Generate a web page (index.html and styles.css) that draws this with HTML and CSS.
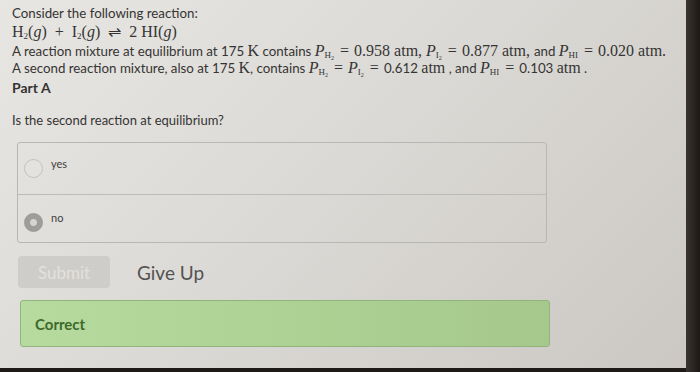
FILE: index.html
```html
<!DOCTYPE html>
<html>
<head>
<meta charset="utf-8">
<link rel="stylesheet" href="styles.css">
</head>
<body>
<div class="screen">
  <div class="page">
    <div class="intro">
      <div class="line">Consider the following reaction:</div>
      <div class="line eq"><span class="m">H<sub>2</sub>(<i>g</i>) &nbsp;+&nbsp; I<sub>2</sub>(<i>g</i>) &nbsp;⇌&nbsp; 2 HI(<i>g</i>)</span></div>
      <div class="line">A reaction mixture at equilibrium at 175 <span class="m">K</span> contains <span class="m"><i>P</i><sub>H<span class="s2">2</span></sub><span class="op">=</span>0.958 atm, <i>P</i><sub>I<span class="s2">2</span></sub><span class="op">=</span>0.877 atm, </span>and <span class="m"><i>P</i><sub>HI</sub><span class="op">=</span>0.020 atm.</span></div>
      <div class="line">A second reaction mixture, also at 175 <span class="m">K</span>, contains <span class="m"><i>P</i><sub>H<span class="s2">2</span></sub><span class="op">=</span><i>P</i><sub>I<span class="s2">2</span></sub><span class="op">=</span></span>0.612 <span class="m">atm</span> , and <span class="m"><i>P</i><sub>HI</sub><span class="op">=</span></span>0.103 <span class="m">atm</span> .</div>
    </div>
    <div class="part">Part A</div>
    <div class="question">Is the second reaction at equilibrium?</div>
    <div class="choices">
      <div class="choice"><span class="radio"></span><span class="label">yes</span></div>
      <div class="choice"><span class="radio on"></span><span class="label">no</span></div>
    </div>
    <div class="actions">
      <span class="submit">Submit</span>
      <span class="giveup">Give Up</span>
    </div>
    <div class="correct">Correct</div>
  </div>
  <div class="bezel"></div>
</div>
</body>
</html>
```
FILE: styles.css
```css
html, body {
  margin: 0;
  padding: 0;
  width: 700px;
  height: 372px;
  overflow: hidden;
  background: #1e1a18;
}
.screen {
  display: flex;
  width: 700px;
  height: 372px;
}
.page {
  flex: 1;
  height: 368px;
  background: linear-gradient(135deg, #e8e6e2 0%, #dcdad6 45%, #cbc8c4 100%);
  font-family: Lato, "Open Sans", sans-serif;
  color: #353433;
  padding: 5px 0 0 12px;
  box-sizing: border-box;
}
.bezel {
  width: 14px;
  height: 372px;
  background: linear-gradient(90deg, #3a3330 0%, #1c1816 100%);
}
.intro .line {
  font-size: 13.3px;
  height: 17px;
  line-height: 17px;
  white-space: nowrap;
}
.intro .line:first-child {
  height: 19px;
}
.intro .line.eq {
  height: 19px;
}
.m {
  font-family: "Liberation Serif", serif;
  font-size: 16px;
  line-height: 0;
}
.m sub {
  font-size: 9px;
  line-height: 0;
  vertical-align: -2px;
}
.m .s2 {
  font-size: 6px;
  position: relative;
  top: 2px;
}
.op {
  margin: 0 5px 0 6px;
}
.eq .m {
  font-size: 16px;
}
.part {
  font-weight: bold;
  font-size: 14px;
  margin-top: 2px;
  line-height: 17px;
}
.question {
  font-size: 13px;
  margin-top: 16px;
  line-height: 16px;
}
.choices {
  margin-top: 14px;
  margin-left: 5px;
  width: 530px;
  border: 1px solid #b9b7b4;
  border-radius: 3px;
  box-sizing: border-box;
}
.choice {
  height: 51px;
  display: flex;
  align-items: flex-start;
  padding: 14px 0 0 6px;
  box-sizing: border-box;
}
.choice + .choice {
  border-top: 1px solid #bdbbb8;
  height: 48px;
  padding-top: 16px;
}
.radio {
  width: 19px;
  height: 19px;
  border-radius: 50%;
  background: #e4e2df;
  border: 1px solid #c4c2bf;
  box-sizing: border-box;
  margin-top: 2px;
}
.radio.on {
  background: radial-gradient(circle, #d6d4d1 0 3px, #9f9d9a 4px);
  border-color: #9a9895;
}
.label {
  font-size: 11px;
  margin-left: 8px;
  color: #3f3e3d;
}
.actions {
  display: flex;
  align-items: center;
  margin-top: 13px;
  margin-left: 6px;
}
.submit {
  width: 92px;
  height: 32px;
  border-radius: 4px;
  background: #cfcdc9;
  color: #e3e1dd;
  font-size: 17px;
  display: flex;
  align-items: center;
  justify-content: center;
}
.giveup {
  font-size: 19px;
  color: #545352;
  margin-left: 27px;
}
.correct {
  margin-top: 12px;
  margin-left: 8px;
  width: 530px;
  height: 47px;
  background: linear-gradient(90deg, #b7da9e 0%, #abd092 60%, #a6c78d 100%);
  border: 1px solid #8fb57a;
  border-radius: 3px;
  box-sizing: border-box;
  font-size: 15px;
  font-weight: bold;
  color: #3d6a2b;
  display: flex;
  align-items: center;
  padding-left: 14px;
}
```
